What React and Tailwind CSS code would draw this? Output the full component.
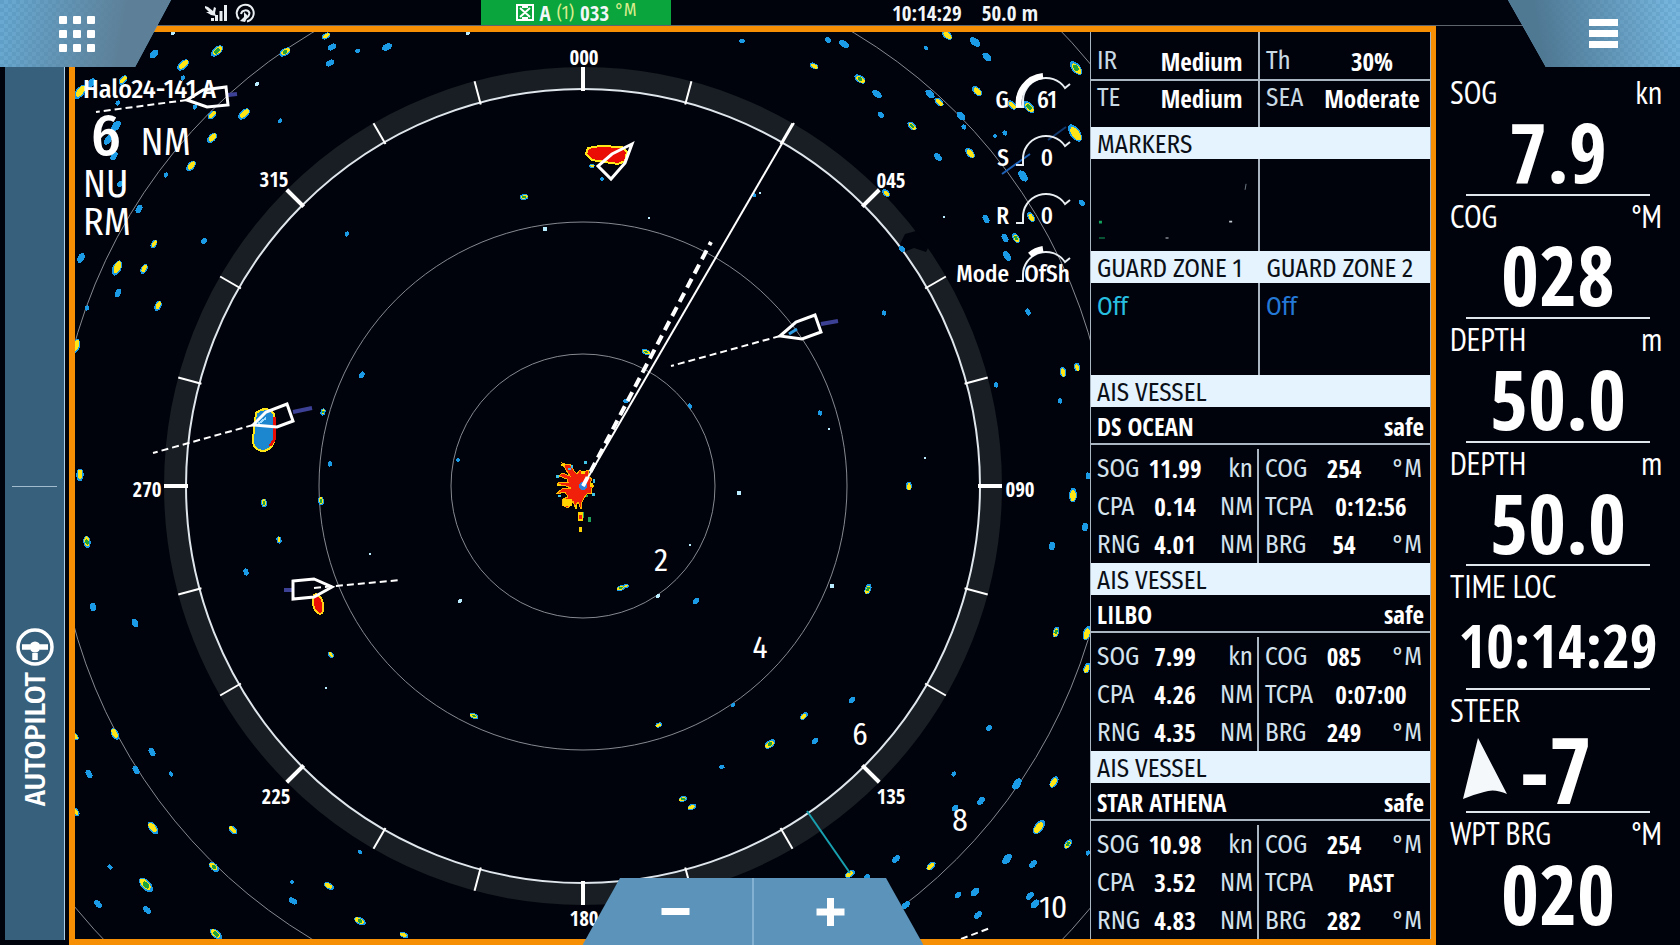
const CX = 583;
const CY = 486;
const NM = 66;

const narrow = 'font-["PT_Sans_Narrow","Roboto_Condensed",Roboto,sans-serif]';
const regular = 'font-["Fira_Sans_Condensed","Roboto_Condensed",Roboto,sans-serif] font-normal';
const medium = 'font-["Fira_Sans_Condensed","Roboto_Condensed",Roboto,sans-serif] font-medium';
const bold = 'font-["Open_Sans_Condensed","Roboto_Condensed",Roboto,sans-serif] font-bold';

// x, y, size, kind: b = weak, y = medium, g = strong, w = speck
const echoes = [
  [154, 54, 6, 'b'], [217, 51, 8, 'g'], [183, 65, 8, 'y'], [285, 52, 7, 'g'], [326, 36, 5, 'y'], [332, 47, 5, 'b'],
  [330, 63, 5, 'b'], [358, 51, 3, 'b'], [387, 47, 6, 'b'], [173, 33, 2, 'w'], [468, 33, 2, 'w'], [257, 84, 2, 'w'],
  [244, 114, 8, 'y'], [212, 115, 6, 'y'], [280, 121, 3, 'b'], [212, 138, 7, 'y'], [191, 166, 7, 'y'], [166, 175, 3, 'b'],
  [139, 209, 5, 'b'], [154, 244, 5, 'y'], [204, 241, 4, 'b'], [81, 258, 6, 'b'], [117, 268, 9, 'y'], [144, 269, 6, 'y'],
  [118, 293, 5, 'b'], [158, 306, 6, 'y'], [87, 308, 3, 'b'], [347, 234, 3, 'b'], [524, 197, 5, 'g'], [545, 229, 3, 'w'],
  [116, 126, 7, 'b'], [108, 140, 6, 'b'], [114, 156, 5, 'b'], [120, 184, 4, 'b'], [123, 80, 6, 'y'], [80, 92, 9, 'y'],
  [91, 83, 6, 'b'], [183, 78, 3, 'b'], [118, 103, 3, 'b'], [195, 107, 3, 'b'],
  [742, 41, 3, 'b'], [828, 40, 4, 'b'], [844, 44, 6, 'b'], [814, 66, 5, 'y'], [860, 79, 7, 'g'], [877, 94, 6, 'b'],
  [881, 115, 4, 'b'], [912, 126, 6, 'g'], [926, 48, 3, 'b'], [947, 35, 7, 'y'], [975, 42, 7, 'b'], [987, 57, 6, 'b'],
  [930, 94, 6, 'b'], [939, 102, 6, 'y'], [977, 91, 7, 'y'], [1012, 105, 6, 'y'], [1029, 107, 8, 'g'], [1076, 68, 9, 'g'],
  [1075, 133, 11, 'y'], [961, 116, 6, 'b'], [964, 127, 3, 'b'], [1005, 133, 3, 'b'], [995, 136, 2, 'b'], [938, 157, 5, 'b'],
  [970, 153, 7, 'y'], [1023, 176, 7, 'b'], [886, 193, 5, 'y'], [986, 219, 5, 'b'], [1031, 217, 6, 'y'], [1082, 203, 4, 'b'],
  [1005, 238, 5, 'b'], [1016, 238, 6, 'g'], [1007, 256, 6, 'b'], [944, 217, 1, 'w'], [902, 249, 4, 'b'], [754, 195, 3, 'b'],
  [760, 193, 1, 'w'], [649, 218, 1, 'w'], [1028, 312, 4, 'b'], [884, 313, 3, 'b'], [592, 166, 3, 'y'], [602, 179, 2, 'b'],
  [76, 346, 8, 'y'], [362, 375, 4, 'b'], [323, 412, 4, 'g'], [80, 475, 7, 'y'], [330, 464, 3, 'b'], [264, 503, 5, 'g'],
  [321, 501, 5, 'g'], [279, 540, 4, 'y'], [87, 542, 7, 'g'], [246, 572, 4, 'b'], [370, 554, 1, 'w'], [458, 460, 2, 'b'],
  [460, 601, 2, 'w'], [93, 607, 5, 'b'], [135, 623, 5, 'b'], [331, 655, 4, 'y'], [326, 688, 1, 'w'], [474, 716, 5, 'g'],
  [115, 734, 7, 'y'], [152, 752, 5, 'b'], [136, 770, 5, 'b'], [89, 774, 5, 'b'], [171, 774, 3, 'b'], [76, 737, 4, 'y'],
  [76, 812, 5, 'y'], [153, 828, 8, 'y'], [233, 830, 6, 'y'], [214, 867, 7, 'g'], [110, 867, 3, 'b'], [146, 885, 10, 'g'],
  [147, 910, 5, 'b'], [98, 904, 5, 'b'], [360, 852, 3, 'b'], [292, 882, 2, 'b'], [293, 901, 5, 'b'], [329, 886, 6, 'y'],
  [360, 921, 7, 'g'], [216, 934, 8, 'g'], [404, 935, 5, 'y'],
  [1056, 632, 6, 'g'], [1087, 633, 8, 'y'], [1087, 668, 6, 'y'], [852, 700, 4, 'b'], [804, 716, 5, 'y'], [815, 741, 4, 'b'],
  [770, 744, 7, 'g'], [659, 725, 4, 'y'], [733, 705, 3, 'b'], [722, 767, 3, 'b'], [683, 799, 5, 'g'], [692, 807, 5, 'y'],
  [850, 874, 6, 'y'], [867, 877, 4, 'b'], [896, 859, 5, 'b'], [931, 866, 6, 'y'], [989, 728, 4, 'b'], [954, 774, 3, 'b'],
  [955, 808, 4, 'b'], [981, 801, 5, 'b'], [1017, 784, 7, 'b'], [1054, 782, 7, 'y'], [1039, 827, 9, 'y'], [1068, 844, 6, 'g'],
  [1007, 859, 7, 'b'], [1033, 864, 5, 'b'], [975, 892, 6, 'b'], [958, 895, 4, 'b'], [978, 915, 5, 'b'], [1030, 896, 5, 'b'],
  [1035, 904, 6, 'b'], [906, 905, 5, 'b'], [1088, 853, 3, 'b'],
  [646, 352, 5, 'g'], [626, 401, 3, 'b'], [690, 406, 3, 'b'], [820, 413, 3, 'b'], [829, 429, 1, 'w'], [925, 458, 1, 'w'],
  [909, 486, 5, 'y'], [739, 493, 3, 'w'], [996, 385, 3, 'b'], [1063, 372, 6, 'y'], [1077, 367, 5, 'y'], [1060, 401, 3, 'b'],
  [1088, 476, 4, 'b'], [1073, 495, 8, 'y'], [1085, 527, 5, 'b'], [1052, 546, 5, 'b'], [690, 545, 1, 'w'], [658, 596, 2, 'w'],
  [621, 588, 5, 'g'], [626, 586, 3, 'y'], [696, 601, 4, 'b'], [832, 586, 3, 'w'], [868, 589, 6, 'g'],
];

const bearings = [
  ['000', 584, 58], ['045', 891, 181], ['090', 1020, 490], ['135', 891, 797],
  ['180', 584, 919], ['225', 276, 797], ['270', 147, 490], ['315', 274, 180],
];

const ranges = [['2', 661, 561], ['4', 760, 648], ['6', 860, 735], ['8', 960, 821], ['10', 1053, 908]];

const gauges = [
  { label: 'G', value: '61', y: 102, fill: 'M1019 107 A27 27 0 0 1 1043 76' },
  { label: 'S', value: '0', y: 160 },
  { label: 'R', value: '0', y: 218 },
  { label: 'Mode', value: 'OfSh', y: 276, fill: 'M1030 255 A27 27 0 0 1 1043 249' },
];

const vessels = [
  { hull: '632,144 612,154 598,166 611,179 625,163' },
  { hull: '780,336 796,322 815,315 821,332 802,339', tail: [821, 324, 838, 321], course: [780, 336, 671, 366] },
  { hull: '253,425 266,412 287,404 293,421 277,427', tail: [293, 412, 312, 408], course: [253, 425, 153, 453] },
  { hull: '293,581 314,579 332,587 314,597 293,599', tail: [284, 590, 293, 590], course: [314, 588, 401, 580] },
  { hull: '187,100 203,90 226,87 228,105 207,107', tail: [228, 95, 237, 94], course: [187, 100, 96, 112] },
];

const targets = [
  { name: 'DS OCEAN', sog: '11.99', cog: '254', cpa: '0.14', tcpa: '0:12:56', rng: '4.01', brg: '54' },
  { name: 'LILBO', sog: '7.99', cog: '085', cpa: '4.26', tcpa: '0:07:00', rng: '4.35', brg: '249' },
  { name: 'STAR ATHENA', sog: '10.98', cog: '254', cpa: '3.52', tcpa: 'PAST', rng: '4.83', brg: '282' },
];

const readouts = [
  { label: 'SOG', unit: 'kn', value: '7.9' },
  { label: 'COG', unit: '°M', value: '028' },
  { label: 'DEPTH', unit: 'm', value: '50.0' },
  { label: 'DEPTH', unit: 'm', value: '50.0' },
  { label: 'TIME LOC', value: '10:14:29' },
  { label: 'STEER', value: '-7' },
  { label: 'WPT BRG', unit: '°M', value: '020' },
];

function Echo({ x, y, size, kind }) {
  const angle = (Math.atan2(y - CY, x - CX) * 180) / Math.PI + 90;
  if (kind === 'w') return <circle cx={x} cy={y} r={size / 2 + 1} fill="#b9ecff" />;
  return (
    <g transform={`translate(${x} ${y}) rotate(${angle})`}>
      <ellipse rx={size * 0.9} ry={size * 0.38 + 1} fill="#1b9ae6" />
      {kind !== 'b' && <ellipse cx={size * 0.1} rx={size * 0.7} ry={size * 0.35} fill="#ffe616" />}
      {kind === 'g' && <ellipse rx={size * 0.4} ry={size * 0.25} fill="#21a338" />}
    </g>
  );
}

function Radar() {
  const ticks = Array.from({ length: 24 }, (_, i) => i * 15);
  return (
    <svg
      className="absolute inset-0 size-full"
      viewBox="75 32 1015 907"
      preserveAspectRatio="xMidYMid slice"
      role="img"
      aria-label="Radar"
    >
      <circle cx={CX} cy={CY} r="408" fill="none" stroke="#181e23" strokeWidth="22" />
      <path d="M905 234 L916 231 L922 238 L930 244 L926 252 L914 248 L904 252 L900 244Z" fill="#01030c" />
      {[2, 4, 8, 10].map((r) => (
        <circle key={r} cx={CX} cy={CY} r={r * NM} fill="none" stroke="#85898f" strokeWidth="1" />
      ))}
      <circle cx={CX} cy={CY} r="397" fill="none" stroke="#dfe6ec" strokeWidth="2" />
      {ticks.map((deg) => (
        <line
          key={deg}
          x1={CX}
          x2={CX}
          y1={CY - 395}
          y2={CY - 419}
          stroke="#fff"
          strokeWidth={deg % 45 === 0 ? 4 : 2}
          transform={`rotate(${deg} ${CX} ${CY})`}
        />
      ))}

      <g shapeRendering="crispEdges">
        {echoes.map(([x, y, size, kind]) => (
          <Echo key={`${x}-${y}`} x={x} y={y} size={size} kind={kind} />
        ))}
        <path d="M588 148 L600 146 L622 147 L627 152 L625 161 L618 164 L592 160 L586 154Z" fill="#e90d05" stroke="#ffe616" strokeWidth="2" />
        <path d="M256 413 Q266 405 274 414 L275 438 Q272 451 262 451 Q252 449 253 438Z" fill="#1c86cf" stroke="#ffe616" strokeWidth="2" />
        <path d="M274 417 V440 L270 446" fill="none" stroke="#e90d05" strokeWidth="3" />
        <path d="M258 424 L266 418" stroke="#9fdcff" strokeWidth="2" />
        <ellipse cx="318" cy="604" rx="5" ry="10" fill="#e90d05" stroke="#ffd316" strokeWidth="2" transform="rotate(-15 318 604)" />
      </g>

      <g shapeRendering="crispEdges">
        <path
          d="M562 463 L567 465 L570 464 L574 471 L577 474 L580 470 L583 473 L588 470 L589 477 L592 479 L590 483 L594 486 L591 489 L592 493 L587 494 L584 498 L582 502 L581 509 L578 502 L575 507 L573 501 L568 508 L562 505 L563 499 L568 497 L565 492 L556 494 L562 489 L571 488 L566 486 L557 485 L559 482 L568 482 L567 479 L559 476 L562 473 L570 476 L566 470Z"
          fill="#f0200a"
          stroke="#ffb400"
          strokeWidth="1"
        />
        <path d="M563 499 H572 V506 H563Z M578 512 H583 V521 H578Z M579 527 H582 V532 H579Z M561 464 h4 v2 h-4z M581 471 h4 v3 h-4z M590 483 h3 v4 h-3z M557 484 h4 v2 h-4z M575 505 h2 v4 h-2z" fill="#ffd400" />
        <path d="M579 515 h3 v4 h-3z" fill="#f0200a" />
        <path d="M556 475 h3 v3 h-3z M584 461 h3 v3 h-3z M592 493 h3 v3 h-3z M558 495 h3 v2 h-3z M593 479 h2 v4 h-2z M571 465 h2 v3 h-2z M568 468 h3 v2 h-3z" fill="#3fc4e8" />
        <path d="M588 517 h3 v5 h-3z M583 512 h1 v6 h-1z M586 495 h2 v2 h-2z" fill="#21a35a" />
        <circle cx="583" cy="486" r="4" fill="#2f7fd6" />
      </g>

      <line x1="1002" y1="174" x2="1030" y2="154" stroke="#1d62b8" strokeWidth="2" />
      <line x1="1048" y1="140" x2="1066" y2="127" stroke="#123a70" strokeWidth="2" />
      <line x1="807" y1="811" x2="850" y2="873" stroke="#18a0b0" strokeWidth="2" />
      <line x1="961" y1="939" x2="990" y2="928" stroke="#fff" strokeWidth="2" strokeDasharray="7 4" />

      {vessels.map((v) => (
        <g key={v.hull} fill="none" strokeWidth="2">
          {v.tail && <line x1={v.tail[0]} y1={v.tail[1]} x2={v.tail[2]} y2={v.tail[3]} stroke="#3d4196" strokeWidth="4" />}
          {v.course && (
            <line x1={v.course[0]} y1={v.course[1]} x2={v.course[2]} y2={v.course[3]} stroke="#fff" strokeDasharray="7 4" />
          )}
          <polygon points={v.hull} stroke="#fff" strokeWidth="3" />
        </g>
      ))}
      <path d="M789 334 L797 329" stroke="#2f9be0" strokeWidth="3" />

      <line x1={CX} y1={CY} x2="794" y2="123" stroke="#fff" strokeWidth="2" />
      <line x1={CX} y1={CY} x2="711" y2="242" stroke="#fff" strokeWidth="4" strokeDasharray="10 6" />

      <g className={bold} fill="#fff" fontSize="21" textAnchor="middle">
        {bearings.map(([text, x, y]) => (
          <text key={text} x={x} y={y + 7}>{text}</text>
        ))}
      </g>
      <g className={regular} fill="#fff" fontSize="31" textAnchor="middle">
        {ranges.map(([text, x, y]) => (
          <text key={text} x={x} y={y + 10}>{text}</text>
        ))}
      </g>

      {gauges.map((g) => (
        <g key={g.label} className={medium} fontSize="23">
          <path
            d={`M1016 ${g.y + 5} h7 v-5 A23 23 0 0 1 1065 ${g.y - 14} l5 -4`}
            fill="none"
            stroke="#e8eef2"
            strokeWidth="2"
          />
          {g.fill && <path d={g.fill} fill="none" stroke="#fff" strokeWidth="6" />}
          <text x="1009" y={g.y + 6} fill="#fff" textAnchor="end">{g.label}</text>
          <text x="1047" y={g.y + 6} fill="#fff" textAnchor="middle">{g.value}</text>
        </g>
      ))}
    </svg>
  );
}

function Band({ children }) {
  return <h2 className={`flex h-8 shrink-0 items-center bg-[#e4f3fd] px-[6px] pt-1 text-[25px] leading-7 text-[#0a0f18] ${regular}`}>{children}</h2>;
}

function Setting({ label, value, className }) {
  return (
    <div className={`flex items-center pl-[6px] text-[25px] leading-7 ${className}`}>
      <dt className={`w-12 text-[#c9d9e4] ${regular}`}>{label}</dt>
      <dd className={`flex-1 text-center text-white ${bold}`}>{value}</dd>
    </div>
  );
}

function AisTarget({ target }) {
  const label = `pl-[6px] pt-[2px] text-left text-[#d3e2ec] ${regular}`;
  const value = `text-center text-white ${bold}`;
  const unit = `pt-[2px] text-right text-[#d3e2ec] ${regular}`;
  const right = 'border-l-2 border-[#aab6c2]';
  return (
    <section>
      <Band>AIS VESSEL</Band>
      <div className={`flex h-[38px] items-center justify-between border-b-2 border-[#aab6c2] px-[6px] pt-[2px] text-[25px] leading-7 text-white ${bold}`}>
        <span>{target.name}</span>
        <span>safe</span>
      </div>
      <table className="mt-1 h-[114px] w-full table-fixed text-[25px] leading-7">
        <colgroup>
          <col className="w-[56px]" />
          <col className="w-[56px]" />
          <col className="w-[55px]" />
          <col className="w-[62px]" />
          <col className="w-[48px]" />
          <col className="w-[62px]" />
        </colgroup>
        <tbody>
          <tr>
            <th className={label}>SOG</th>
            <td className={value}>{target.sog}</td>
            <td className={`pr-1 ${unit}`}>kn</td>
            <th className={`${label} ${right}`}>COG</th>
            <td className={value}>{target.cog}</td>
            <td className={`pr-2 ${unit}`}>°M</td>
          </tr>
          <tr>
            <th className={label}>CPA</th>
            <td className={value}>{target.cpa}</td>
            <td className={`pr-1 ${unit}`}>NM</td>
            <th className={`${label} ${right}`}>TCPA</th>
            <td className={`pr-2 ${value}`} colSpan={2}>{target.tcpa}</td>
          </tr>
          <tr>
            <th className={label}>RNG</th>
            <td className={value}>{target.rng}</td>
            <td className={`pr-1 ${unit}`}>NM</td>
            <th className={`${label} ${right}`}>BRG</th>
            <td className={value}>{target.brg}</td>
            <td className={`pr-2 ${unit}`}>°M</td>
          </tr>
        </tbody>
      </table>
    </section>
  );
}

function InfoPanel() {
  return (
    <div className="flex w-[341px] shrink-0 flex-col border-x border-[#aab6c2] bg-[#01030c]">
      <dl className="grid h-[95px] shrink-0 grid-cols-[167px_1fr]">
        <Setting label="IR" value="Medium" className="border-b-2 border-[#aab6c2] pt-3" />
        <Setting label="Th" value="30%" className="border-b-2 border-l-2 border-[#aab6c2] pt-3" />
        <Setting label="TE" value="Medium" className="pb-3" />
        <Setting label="SEA" value="Moderate" className="border-l-2 border-[#aab6c2] pb-3" />
      </dl>
      <Band>MARKERS</Band>
      <div className="grid flex-1 grid-cols-[167px_1fr]">
        <div>
          <svg className="size-full" viewBox="0 0 168 93" aria-hidden="true">
            <path d="M8 62h3v3h-3z M8 79h6v1h-6z" fill="#12a35e" />
            <path d="M75 79h3v1h-3z M139 62h3v2h-3z" fill="#c4ccd2" />
            <path d="M156 25l-1 6" stroke="#6d7880" />
          </svg>
        </div>
        <div className="border-l-2 border-[#aab6c2]" />
      </div>
      <div className="grid shrink-0 grid-cols-2">
        <Band>GUARD ZONE 1</Band>
        <Band>GUARD ZONE 2</Band>
      </div>
      <div className={`grid flex-1 grid-cols-[167px_1fr] text-[25px] leading-8 ${regular}`}>
        <p className="px-[6px] pt-2 text-[#27bfe0]">Off</p>
        <p className="border-l-2 border-[#aab6c2] px-[6px] pt-2 text-[#2478d6]">Off</p>
      </div>
      {targets.map((t) => (
        <AisTarget key={t.name} target={t} />
      ))}
    </div>
  );
}

function Readout({ item, last }) {
  const size = item.value.length > 4 ? 'text-[60px]' : 'text-[82px]';
  return (
    <section className="flex min-h-[120px] flex-1 flex-col pr-[18px] pl-[14px] text-white">
      <div className={`flex justify-between pt-1 text-[32px] leading-8 ${narrow}`}>
        <h2>{item.label}</h2>
        <span>{item.unit}</span>
      </div>
      {item.label === 'STEER' ? (
        <div className="flex flex-1 items-center gap-3 pl-3">
          <svg className="h-[62px] w-[46px]" viewBox="0 0 46 62" aria-hidden="true">
            <path d="M16 0 L45 56 Q32 50 22 54 Q10 57 1 61Z" fill="#f4f8fb" />
          </svg>
          <p className={`text-[92px] leading-[76px] ${bold}`}>{item.value}</p>
        </div>
      ) : (
        <p className={`flex flex-1 items-center justify-center pl-1 leading-[76px] ${size} ${bold}`}>{item.value}</p>
      )}
      {!last && <hr className="mr-3 ml-4 border-t-2 border-[#dfe6ec]" />}
    </section>
  );
}

function StatusIcons() {
  return (
    <div className="flex items-center gap-2" aria-hidden="true">
      <svg width="22" height="18" viewBox="0 0 22 18" fill="#e8eef2">
        <path d="M0 2 L3 3 L8 7 L9 3 L11 4 L10 9 L11 12 L6 11 L1 8 L4 8 L0 4Z" />
        <path d="M6 14h3v3h-3z M10 11h3v6h-3z M14.500 7h3v10h-3z M19 1h3v16h-3z" />
      </svg>
      <svg width="20" height="20" viewBox="0 0 20 20" fill="none" stroke="#e8eef2" strokeWidth="2">
        <path d="M4 16 A8.500 8.500 0 1 1 12 18.500" />
        <path d="M6 11 A4.500 4.500 0 0 1 14.500 10 Q14 14 11 15" strokeWidth="2" />
        <path d="M9 9 L13 13 L10 19 L5 18 L9 14Z" fill="#e8eef2" stroke="none" />
      </svg>
    </div>
  );
}

export default function App() {
  return (
    <div className="relative flex min-h-screen flex-col overflow-hidden bg-[#01030c]">
      <header className={`relative flex h-[26px] items-center border-b border-[#5d646d] text-[21px] leading-6 text-[#f2f6f8] ${bold}`}>
        <div className="w-[205px]" />
        <StatusIcons />
        <div className="ml-[226px] flex h-full w-[190px] items-center justify-center gap-[6px] bg-[#0aa53c]">
          <svg width="18" height="17" viewBox="0 0 18 17" fill="none" stroke="#fff" strokeWidth="2" aria-hidden="true">
            <path d="M1 1h16v15h-16z M4 4l10 9 M14 4l-10 9 M6 3h6 M6 14h6" />
          </svg>
          <span>A</span>
          <span className={`text-[18px] text-[#d9ec8c] ${regular}`}>(1)</span>
          <span>033</span>
          <span className={`self-start text-[18px] leading-5 text-[#d9ec8c] ${regular}`}>°M</span>
        </div>
        <time className="ml-[221px]">10:14:29</time>
        <span className="ml-5">50.0 m</span>
      </header>

      <main className="flex flex-1">
        <aside className="flex w-[69px] shrink-0 flex-col pt-[41px] pr-1 pb-[5px] pl-[5px]">
          <div className="grid flex-1 grid-rows-[12fr_13fr] border-r border-[#a9cfe8] bg-[#37607c]">
            <div />
            <button
              type="button"
              className={`mx-[7px] flex flex-col items-center justify-end gap-[6px] border-t border-[#a3bccd] pb-[134px] text-[30px] leading-8 text-white ${medium}`}
            >
              <svg width="38" height="38" viewBox="0 0 38 38" fill="none" stroke="#fff" aria-hidden="true">
                <circle cx="19" cy="19" r="17" strokeWidth="3.500" />
                <path d="M6 19h8 M24 19h8 M19 25v7" strokeWidth="5.500" />
                <circle cx="19" cy="19" r="5.500" fill="#fff" stroke="none" />
              </svg>
              <span className="rotate-180 [writing-mode:vertical-rl]">AUTOPILOT</span>
            </button>
          </div>
        </aside>

        <section className="relative flex flex-1 border-6 border-r-5 border-[#f78f05]">
          <div className="relative flex-1 overflow-hidden">
            <Radar />
            <div className={`relative px-2 pt-[43px] text-[38px] leading-[38px] text-white ${regular}`}>
              <p className={`text-[26px] leading-[30px] ${medium}`}>Halo24-141 A</p>
              <p className="mt-2 flex items-baseline gap-5 pl-2 leading-[45px]">
                <span className={`text-[58px] ${medium}`}>6</span>
                <span>NM</span>
              </p>
              <p>NU</p>
              <p>RM</p>
            </div>
          </div>
          <InfoPanel />
          <div className="absolute -bottom-[6px] left-1/2 flex h-[67px] w-[341px] -translate-x-1/2 bg-[#5b93ba] [clip-path:polygon(11%_0,89%_0,100%_100%,0_100%)]">
            <button type="button" aria-label="Zoom out" className="flex flex-1 items-center justify-center border-r border-[#a9cfe8] pl-4">
              <span className="h-[7px] w-7 bg-white" />
            </button>
            <button type="button" aria-label="Zoom in" className="flex flex-1 items-center justify-center pr-4">
              <svg width="30" height="30" viewBox="0 0 30 30" stroke="#fff" strokeWidth="7" aria-hidden="true">
                <path d="M1 15h28 M15 1v28" />
              </svg>
            </button>
          </div>
        </section>

        <aside className="flex w-[244px] shrink-0 flex-col pt-[46px] pb-2">
          {readouts.map((item, i) => (
            <Readout key={i} item={item} last={i === readouts.length - 1} />
          ))}
        </aside>
      </main>

      <button
        type="button"
        aria-label="Pages"
        className="absolute top-0 left-0 flex h-[67px] w-[171px] items-center bg-[linear-gradient(100deg,#5f8fb300_5%,#5d8098_70%),repeating-conic-gradient(#69a8d0_0_25%,#609fc7_0_50%)] bg-[length:100%_100%,8px_8px] pl-[59px] [clip-path:polygon(0_0,100%_0,79%_100%,0_100%)]"
      >
        <span className="grid grid-cols-3 gap-[6px]">
          {Array.from({ length: 9 }, (_, i) => (
            <span key={i} className="size-2 rounded-[1px] bg-white" />
          ))}
        </span>
      </button>
      <button
        type="button"
        aria-label="Menu"
        className="absolute top-0 right-0 flex h-[67px] w-[172px] items-center justify-end bg-[linear-gradient(260deg,#5f8fb300_5%,#4f7893_80%),repeating-conic-gradient(#77b5dd_0_25%,#6cabd3_0_50%)] bg-[length:100%_100%,8px_8px] pr-[62px] [clip-path:polygon(0_0,100%_0,100%_100%,22%_100%)]"
      >
        <span className="grid gap-1">
          <span className="h-[7px] w-[29px] bg-white" />
          <span className="h-[7px] w-[29px] bg-white" />
          <span className="h-[7px] w-[29px] bg-white" />
        </span>
      </button>
    </div>
  );
}
